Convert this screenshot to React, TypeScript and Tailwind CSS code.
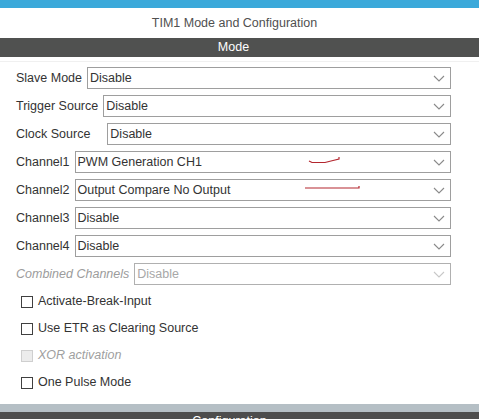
import React from "react"

const font = { fontFamily: '"Liberation Sans", Arial, sans-serif' }

type Row = { label: string; value: string; gap?: string; disabled?: boolean }

const rows: Row[] = [
  { label: "Slave Mode", value: "Disable" },
  { label: "Trigger Source", value: "Disable" },
  { label: "Clock Source", value: "Disable", gap: "ml-[17px]" },
  { label: "Channel1", value: "PWM Generation CH1" },
  { label: "Channel2", value: "Output Compare No Output" },
  { label: "Channel3", value: "Disable" },
  { label: "Channel4", value: "Disable" },
  { label: "Combined Channels", value: "Disable", disabled: true },
]

const checks = [
  { label: "Activate-Break-Input" },
  { label: "Use ETR as Clearing Source" },
  { label: "XOR activation", disabled: true },
  { label: "One Pulse Mode" },
]

function Chevron({ disabled }: { disabled?: boolean }) {
  return (
    <svg width="12" height="7" viewBox="0 0 12 7" className="shrink-0">
      <polyline
        points="1,1 6,6 11,1"
        fill="none"
        stroke={disabled ? "#c8c8c8" : "#8a8a8a"}
        strokeWidth="1.1"
      />
    </svg>
  )
}

function SelectRow({ row }: { row: Row }) {
  return (
    <div className="flex items-center h-[22px]">
      <span
        className={
          row.disabled
            ? "italic text-[#9c9c9c] whitespace-nowrap"
            : "text-[#333333] whitespace-nowrap"
        }
      >
        {row.label}
      </span>
      <div
        className={`${row.gap ?? "ml-[5px]"} flex-1 h-[22px] flex items-center justify-between pl-[2px] pr-[5px] border ${
          row.disabled ? "border-[#b0b0b0]" : "border-[#9e9e9e]"
        } bg-white`}
      >
        <span className={row.disabled ? "text-[#a8a8a8]" : "text-[#333333]"}>{row.value}</span>
        <Chevron disabled={row.disabled} />
      </div>
    </div>
  )
}

export default function App() {
  return (
    <div className="relative w-[479px] h-[419px] overflow-hidden bg-white text-[12.5px] leading-none" style={font}>
      {/* top accent */}
      <div className="h-[8px] bg-[#3ba9da]" />
      <div className="h-[30px] flex items-center justify-center pr-[10px] text-[#505050]">
        TIM1 Mode and Configuration
      </div>
      <div className="h-[19px] bg-[#505150] flex items-center justify-center pr-[12px] text-white">
        Mode
      </div>

      <div className="mt-[4px] border-t border-[#f0f0f0] pt-[5px] pl-[16px] pr-[28px] flex flex-col gap-[6px]">
        {rows.map((r) => (
          <SelectRow key={r.label} row={r} />
        ))}
      </div>

      <div className="mt-[3px] pl-[21px] flex flex-col">
        {checks.map((c) => (
          <div key={c.label} className="h-[27px] flex items-center gap-[5px]">
            <span
              className={
                c.disabled
                  ? "w-[12px] h-[12px] border border-[#cfcfcf] bg-[#ececec]"
                  : "w-[12px] h-[12px] border border-[#404040] bg-white"
              }
            />
            <span className={c.disabled ? "italic text-[#a0a0a0]" : "text-[#333333]"}>{c.label}</span>
          </div>
        ))}
      </div>

      <div className="mt-[8px] h-[8px] bg-[#b5bfc5]" />
      <div className="h-[20px] bg-[#4d4d4d] flex justify-center pt-[3px] pr-[20px] text-white">
        Configuration
      </div>

      {/* red pen annotations */}
      <svg className="absolute left-0 top-0 pointer-events-none" width="479" height="419">
        <path
          d="M309 161 L312 162.5 L325 162.5 L333 160.5 L339 159 L339 157"
          fill="none"
          stroke="#b3262e"
          strokeWidth="1.2"
        />
        <path d="M305 188 L359 188 L359 186" fill="none" stroke="#b3262e" strokeWidth="1.2" />
      </svg>
    </div>
  )
}
